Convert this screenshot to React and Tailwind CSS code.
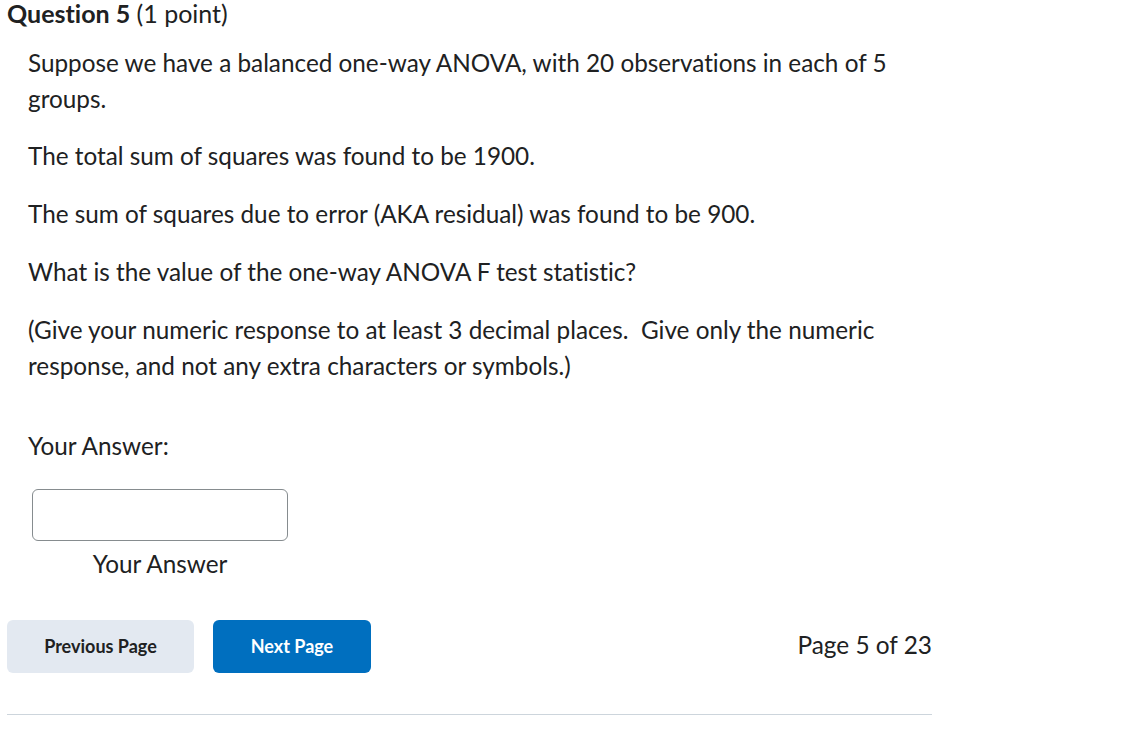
const nl = (s) => s.replace(/ti/g, "t\u200Ci");

export default function App() {
  return (
    <div className="w-[1145px] h-[731px] bg-white text-[#202122] font-[Lato,'Noto_Sans',sans-serif] [font-variant-ligatures:none]">
      <div className="w-[925px] ml-[7px]">
        <h2 className="text-[25px] leading-[27px] m-0">
          <span className="font-bold">{nl("Question 5")}</span> <span className="font-normal">(1 point)</span>
        </h2>
        <div className="pl-[21px] pt-[18px] text-[24.3px] leading-[36px]">
          <p>{nl("Suppose we have a balanced one-way ANOVA, with 20 observations in each of 5 groups.")}</p>
          <p className="mt-[21px]">The total sum of squares was found to be 1900.</p>
          <p className="mt-[22px]">The sum of squares due to error (AKA residual) was found to be 900.</p>
          <p className="mt-[22px]">{nl("What is the value of the one-way ANOVA F test statistic?")}</p>
          <p className="mt-[22px]">(Give your numeric response to at least 3 decimal places.&nbsp; Give only the numeric response, and not any extra characters or symbols.)</p>
          <p className="mt-[44px]">Your Answer:</p>
          <div className="mt-[25px] ml-[4px] w-[256px] flex flex-col items-center">
            <input aria-label="Your Answer" className="w-[256px] h-[52px] border border-[#868c8f] rounded-[6px] bg-white outline-none px-3" />
            <div className="mt-[5px] leading-[36px]">Your Answer</div>
          </div>
        </div>
        <div className="mt-[38px] flex items-center">
          <button className="w-[187px] h-[53px] rounded-[6px] bg-[#e3e9f1] text-[18px] font-bold text-[#202122]">Previous Page</button>
          <button className="ml-[19px] w-[158px] h-[53px] rounded-[6px] bg-[#006fbf] text-[18px] font-bold text-white">Next Page</button>
          <div className="ml-auto mb-[4px] text-[24.4px] leading-[28px]">Page 5 of 23</div>
        </div>
        <div className="mt-[41px] h-px bg-[#cdd5dc]"></div>
      </div>
    </div>
  );
}
